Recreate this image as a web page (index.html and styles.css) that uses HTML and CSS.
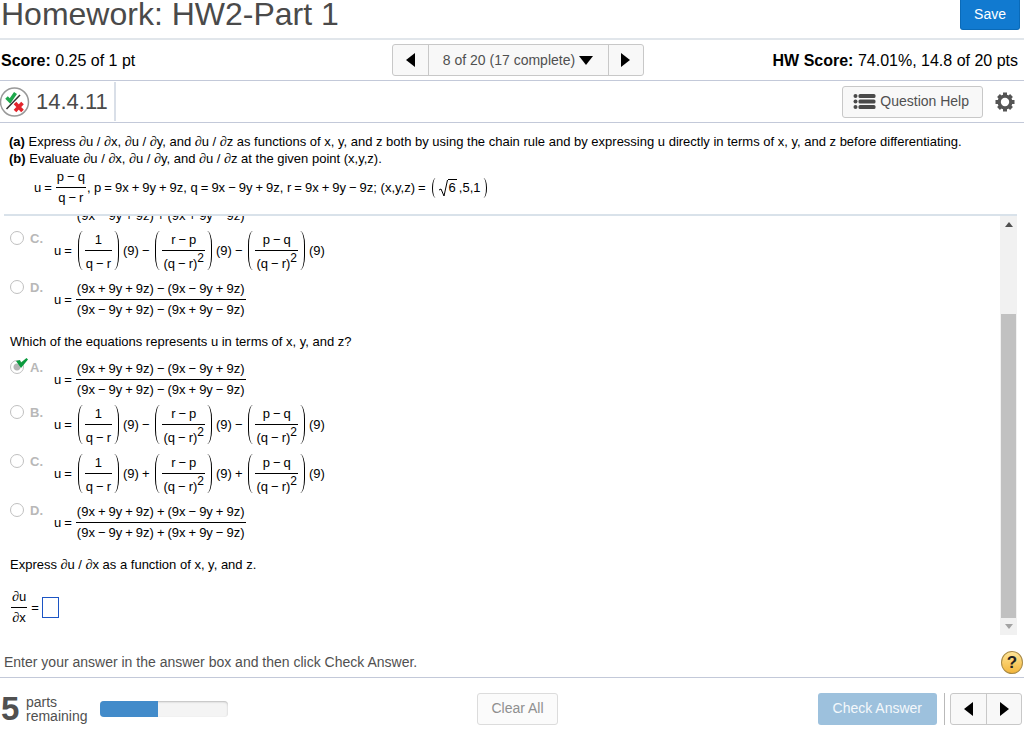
FILE: index.html
```
<!DOCTYPE html>
<html lang="en">
<head>
    <meta charset="utf-8">
    <meta name="viewport" content="width=device-width,initial-scale=1">
    <title>Homework: HW2-Part 1</title>
    <link rel="stylesheet" href="styles.css">
</head>
<body>
	<header class="titlebar">
		<h1>Homework: HW2-Part 1</h1>
		<button class="btn save" type="button">Save</button>
	</header>

	<div class="scorebar">
		<div><b>Score:</b> 0.25 of 1 pt</div>
		<div class="btngroup nav">
			<button type="button" aria-label="Previous question"><i class="tri left"></i></button>
			<button type="button" class="pick">8 of 20 (17 complete)<i class="tri down"></i></button>
			<button type="button" aria-label="Next question"><i class="tri right"></i></button>
		</div>
		<div class="total"><b>HW Score:</b> 74.01%, 14.8 of 20 pts</div>
	</div>

	<div class="questionbar">
		<div class="number">
			<svg width="30" height="30" viewBox="0 0 30 30">
				<circle cx="14.5" cy="15" r="14" fill="#fff" stroke="#999" stroke-width="1.5"/>
				<path d="M6.5 22L20 8" stroke="#333" stroke-width="1.5"/>
				<path d="M6.5 10.5l3.5 3.5L15.5 6" fill="none" stroke="#1fa84c" stroke-width="3.6"/>
				<path d="M15 16l7.5 8M22.5 16l-7.5 8" stroke="#e3242b" stroke-width="3.6"/>
			</svg>
			<span>14.4.11</span>
		</div>
		<button class="btn help" type="button">
			<svg width="23" height="15" viewBox="0 0 23 15" fill="#4a4a4a">
				<circle cx="2.5" cy="2" r="2"/><circle cx="2.5" cy="7.5" r="2"/><circle cx="2.5" cy="13" r="2"/>
				<rect x="5.5" y="0" width="17" height="4" rx="1.5"/><rect x="5.5" y="5.5" width="17" height="4" rx="1.5"/><rect x="5.5" y="11" width="17" height="4" rx="1.5"/>
			</svg>
			Question Help
		</button>
		<button class="gear" type="button" aria-label="Settings">
			<svg width="20" height="20" viewBox="0 0 20 20">
				<g stroke="#555" stroke-width="4">
					<path d="M10 .5v19M.5 10h19M3.5 3.5l13 13M16.5 3.5l-13 13"/>
				</g>
				<circle cx="10" cy="10" r="7.5" fill="#555"/>
				<circle cx="10" cy="10" r="4.2" fill="#fff"/>
			</svg>
		</button>
	</div>

	<section class="prompt">
		<p><b>(a)</b> Express <i class="d">∂</i>u / <i class="d">∂</i>x, <i class="d">∂</i>u / <i class="d">∂</i>y, and <i class="d">∂</i>u / <i class="d">∂</i>z as functions of x, y, and z both by using the chain rule and by expressing u directly in terms of x, y, and z before differentiating.</p>
		<p><b>(b)</b> Evaluate <i class="d">∂</i>u / <i class="d">∂</i>x, <i class="d">∂</i>u / <i class="d">∂</i>y, and <i class="d">∂</i>u / <i class="d">∂</i>z at the given point (x,y,z).</p>
		<div class="math given">
			u<s>=</s><span class="frac"><span>p<s>−</s>q</span><span>q<s>−</s>r</span></span>,&nbsp;p<s>=</s>9x<s>+</s>9y<s>+</s>9z,&nbsp;q<s>=</s>9x<s>−</s>9y<s>+</s>9z,&nbsp;r<s>=</s>9x<s>+</s>9y<s>−</s>9z;&nbsp;(x,y,z)<s>=</s>
			<span class="paren small"><svg width="9" height="18" viewBox="0 0 9 18"><path d="M0 11l2-1 3 7L8.5 1" fill="none" stroke="#000"/></svg><span class="root">6</span><span>,5,1</span></span>
		</div>
	</section>

	<div class="pane">
		<div class="content">
			<label class="option"><input type="radio" name="chain" disabled><b>B.</b>
				<span class="math">u<s>=</s><span class="frac"><span>(9x<s>+</s>9y<s>+</s>9z)<s>+</s>(9x<s>−</s>9y<s>+</s>9z)</span><span>(9x<s>−</s>9y<s>+</s>9z)<s>+</s>(9x<s>+</s>9y<s>−</s>9z)</span></span></span>
			</label>
			<label class="option tall"><input type="radio" name="chain" disabled><b>C.</b>
				<span class="math">u<s>=</s><span class="paren"><span class="frac"><span>1</span><span>q<s>−</s>r</span></span></span>(9)<s>−</s><span class="paren"><span class="frac"><span>r<s>−</s>p</span><span>(q<s>−</s>r)<sup>2</sup></span></span></span>(9)<s>−</s><span class="paren"><span class="frac"><span>p<s>−</s>q</span><span>(q<s>−</s>r)<sup>2</sup></span></span></span>(9)</span>
			</label>
			<label class="option"><input type="radio" name="chain" disabled><b>D.</b>
				<span class="math">u<s>=</s><span class="frac"><span>(9x<s>+</s>9y<s>+</s>9z)<s>−</s>(9x<s>−</s>9y<s>+</s>9z)</span><span>(9x<s>−</s>9y<s>+</s>9z)<s>−</s>(9x<s>+</s>9y<s>−</s>9z)</span></span></span>
			</label>

			<p>Which of the equations represents u in terms of x, y, and z?</p>
			<label class="option"><input type="radio" name="terms" checked disabled><b>A.</b>
				<svg class="tick" width="13" height="11" viewBox="0 0 13 11"><path d="M0 3l4-1 1 2.5L10.5 0 12 1.5 5 10z" fill="#0b9b3e"/></svg>
				<span class="math">u<s>=</s><span class="frac"><span>(9x<s>+</s>9y<s>+</s>9z)<s>−</s>(9x<s>−</s>9y<s>+</s>9z)</span><span>(9x<s>−</s>9y<s>+</s>9z)<s>−</s>(9x<s>+</s>9y<s>−</s>9z)</span></span></span>
			</label>
			<label class="option tall"><input type="radio" name="terms" disabled><b>B.</b>
				<span class="math">u<s>=</s><span class="paren"><span class="frac"><span>1</span><span>q<s>−</s>r</span></span></span>(9)<s>−</s><span class="paren"><span class="frac"><span>r<s>−</s>p</span><span>(q<s>−</s>r)<sup>2</sup></span></span></span>(9)<s>−</s><span class="paren"><span class="frac"><span>p<s>−</s>q</span><span>(q<s>−</s>r)<sup>2</sup></span></span></span>(9)</span>
			</label>
			<label class="option tall"><input type="radio" name="terms" disabled><b>C.</b>
				<span class="math">u<s>=</s><span class="paren"><span class="frac"><span>1</span><span>q<s>−</s>r</span></span></span>(9)<s>+</s><span class="paren"><span class="frac"><span>r<s>−</s>p</span><span>(q<s>−</s>r)<sup>2</sup></span></span></span>(9)<s>+</s><span class="paren"><span class="frac"><span>p<s>−</s>q</span><span>(q<s>−</s>r)<sup>2</sup></span></span></span>(9)</span>
			</label>
			<label class="option"><input type="radio" name="terms" disabled><b>D.</b>
				<span class="math">u<s>=</s><span class="frac"><span>(9x<s>+</s>9y<s>+</s>9z)<s>+</s>(9x<s>−</s>9y<s>+</s>9z)</span><span>(9x<s>−</s>9y<s>+</s>9z)<s>+</s>(9x<s>+</s>9y<s>−</s>9z)</span></span></span>
			</label>

			<p>Express <i class="d">∂</i>u / <i class="d">∂</i>x as a function of x, y, and z.</p>
			<label class="math answer"><span class="frac"><span><i class="d">∂</i>u</span><span><i class="d">∂</i>x</span></span><s>=</s><input type="text"></label>
		</div>
		<div class="scrollbar" aria-hidden="true">
			<i class="tri up"></i>
			<div class="track"><div class="thumb"></div></div>
			<i class="tri down"></i>
		</div>
	</div>

	<div class="hint">
		<span>Enter your answer in the answer box and then click Check Answer.</span>
		<button type="button" class="ask">?</button>
	</div>

	<footer class="footer">
		<div class="parts">
			<strong>5</strong>
			<span>parts<br>remaining</span>
			<div class="progress"><div class="bar" style="width:45%"></div></div>
		</div>
		<button class="btn clear" type="button" disabled>Clear All</button>
		<div class="actions">
			<button class="btn check" type="button" disabled>Check Answer</button>
			<div class="steps">
				<div class="btngroup">
					<button type="button" aria-label="Previous"><i class="tri left"></i></button>
					<button type="button" aria-label="Next"><i class="tri right"></i></button>
				</div>
			</div>
		</div>
	</footer>
</body>
</html>
```
FILE: styles.css
```
* { box-sizing: border-box; }
body { margin: 0; min-height: 100vh; display: flex; flex-direction: column; background: #fff; color: #000; font: 13px/17px "Liberation Sans", Arial, sans-serif; }
h1, p { margin: 0; font-weight: normal; }
button { font: inherit; color: inherit; padding: 0; cursor: pointer; }
svg { display: block; flex: none; }

/* buttons */
.btn { height: 32px; padding: 0 13px; border: 1px solid #c8c8c8; border-radius: 3px; background: #f8f8f8; color: #505050; font-size: 14px; white-space: nowrap; }
.btngroup { display: flex; height: 32px; border: 1px solid #c8c8c8; border-radius: 3px; background: #f8f8f8; }
.btngroup button { width: 35px; display: flex; align-items: center; justify-content: center; border: 0; background: none; color: #505050; }
.btngroup button + button { border-left: 1px solid #c8c8c8; }
.tri { width: 0; height: 0; border: 0 solid transparent; }
.tri.left { border-width: 7px 9px 7px 0; border-right-color: #000; }
.tri.right { border-width: 7px 0 7px 9px; border-left-color: #000; }
.tri.down { border-width: 9px 7px 0; border-top-color: #000; }

/* top bars */
.titlebar { height: 40px; display: flex; justify-content: space-between; align-items: flex-start; border-bottom: 2px solid #e1e6eb; padding: 0 4px 0 1px; }
.titlebar h1 { font-size: 32px; line-height: 28px; color: #4a4a4a; }
.titlebar .save { height: 30px; border: 1px solid #0a6ab8; border-top: 0; border-radius: 0 0 3px 3px; background: #117ad0; color: #fff; }
.scorebar { height: 41px; display: grid; grid-template-columns: 1fr auto 1fr; align-items: center; border-bottom: 1px solid #c3c9d9; padding: 0 6px 0 1px; font-size: 16px; }
.scorebar .nav { margin-left: 16px; font-size: 14px; }
.scorebar .pick { width: 180px; gap: 4px; }
.total { text-align: right; }
.questionbar { height: 42px; display: flex; align-items: center; border-bottom: 1px solid #c3c9d9; padding-right: 9px; }
.number { height: 39px; display: flex; align-items: center; gap: 6px; margin-right: auto; padding-right: 6px; border-right: 2px solid #d9dfe8; font-size: 22px; color: #4a4a4a; }
.help { display: flex; align-items: center; gap: 4px; padding: 0 13px 0 10px; margin-right: 12px; }
.gear { border: 0; background: none; }

/* math */
.math { display: flex; align-items: center; white-space: nowrap; }
.math s { text-decoration: none; margin: 0 3px; }
.frac { display: inline-flex; flex-direction: column; margin: 0 1px; text-align: center; }
.frac > span { height: 20px; line-height: 20px; padding: 0 1px; }
.frac > span + span { height: 21px; border-top: 1px solid #000; }
.frac sup { font-size: 12px; line-height: 1; vertical-align: 6px; }
.paren { position: relative; display: flex; align-items: center; padding: 0 6px; margin: 0 4px 0 3px; }
.paren::before, .paren::after { content: ""; position: absolute; top: 1px; bottom: 1px; width: 5px; }
.paren::before { left: 0; border-left: 1px solid #000; border-radius: 5px 0 0 5px / 14px 0 0 14px; }
.paren::after { right: 0; border-right: 1px solid #000; border-radius: 0 5px 5px 0 / 0 14px 14px 0; }
.paren .frac > span + span { line-height: 26px; }
.paren.small { height: 22px; padding: 0 7px; }
.root { border-top: 1px solid #000; line-height: 16px; padding: 0 1px; margin-right: 2px; }
.d { font: italic 14px/14px "Liberation Serif", serif; }

.prompt { margin: 0 7px 0 4px; padding: 10px 0 6px 5px; border-bottom: 2px solid #d9e2ea; }
.given { padding-left: 25px; }

/* question body, kept scrolled to its end */
.pane { flex: 1 1 0; min-height: 0; display: flex; margin-right: 7px; }
.content { flex: 1; display: flex; flex-direction: column; justify-content: flex-end; overflow: hidden; padding: 0 0 7px 10px; }
.content > * { flex: none; }
.content p { padding: 9px 0; }
.option { position: relative; display: flex; align-items: flex-start; padding-bottom: 4px; }
.option.tall { padding-bottom: 8px; }
.option > input { appearance: none; width: 14px; height: 14px; margin: 1px 6px 0 0; border: 1px solid #c0c0c0; border-radius: 50%; background: #fff; }
.option > input:checked { background: radial-gradient(circle, #b5b5b5 3px, #fff 4px); }
.option > b { width: 24px; color: #b8b8b8; }
.tick { position: absolute; left: 6px; top: -1px; }
.answer { padding-top: 5px; }
.answer input { width: 17px; height: 21px; padding: 0; border: 1px solid #1c55c4; }

.scrollbar { width: 17px; display: flex; flex-direction: column; align-items: center; background: #f1f1f1; }
.scrollbar .tri.up { margin: 6px 0; border-width: 0 4px 5px; border-bottom-color: #505050; }
.scrollbar .tri.down { margin: 6px 0; border-width: 5px 4px 0; border-top-color: #a3a3a3; }
.track { flex: 1; width: 15px; display: flex; align-items: flex-end; }
.thumb { width: 100%; height: 79%; background: #c1c1c1; }

/* bottom bars */
.hint { height: 43px; display: flex; align-items: center; justify-content: space-between; padding: 12px 1px 0 4px; border-bottom: 1px solid #c3c9d9; font-size: 14px; color: #505050; }
.ask { width: 22px; height: 23px; border: 1px solid #a98a45; border-radius: 50%; background: linear-gradient(#ffe596, #f3b63c); color: #222; font-size: 17px; font-weight: bold; }
.footer { height: 58px; display: grid; grid-template-columns: 1fr auto 1fr; align-items: center; padding: 3px 2px 0 1px; color: #505050; }
.parts { display: flex; align-items: center; font-size: 14px; line-height: 14px; }
.parts strong { width: 25px; font-size: 33px; line-height: 33px; }
.progress { width: 128px; height: 16px; margin-left: 13px; border-radius: 4px; background: #f4f4f4; box-shadow: inset 0 1px 2px #bbb; overflow: hidden; }
.bar { height: 100%; background: #428bca; }
.clear { margin-left: 12px; color: #8f8f8f; border-color: #dcdcdc; background: #fbfbfb; }
.actions { display: flex; justify-content: flex-end; gap: 7px; }
.check { padding: 0 15px; border: 0; background: #9dc1dd; color: #f4f8fb; }
.steps { padding-left: 5px; border-left: 1px solid #b9b9b9; }
```
